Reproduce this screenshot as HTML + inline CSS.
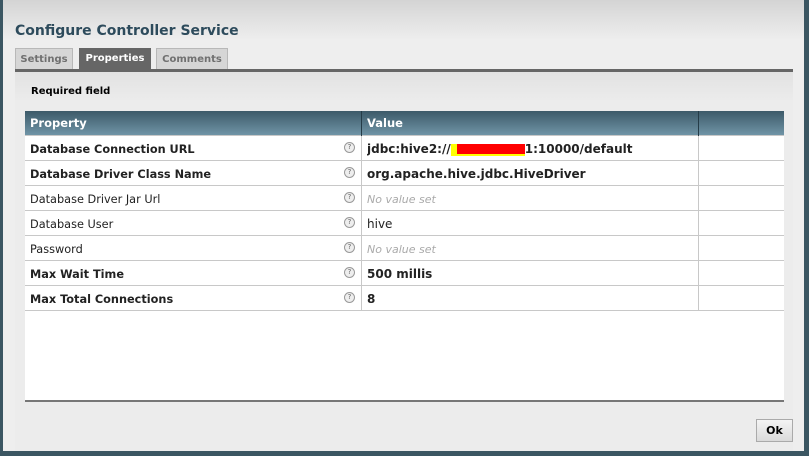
<!DOCTYPE html>
<html><head><style>
body{margin:0;width:809px;height:456px;background:#3b5662;position:relative;overflow:hidden;font-family:"DejaVu Sans","Liberation Sans",sans-serif;}
.dlg{position:absolute;left:3px;top:0;width:801px;height:451px;background:linear-gradient(#d4d4d4 0,#eeeeee 40px,#eeeeee);}
.title{position:absolute;left:12px;top:23px;font-size:14px;font-weight:bold;color:#2d4b5c;}
.tab{position:absolute;top:48px;height:21px;font-size:10px;font-weight:bold;line-height:22px;text-align:center;box-sizing:border-box;}
.off{background:#d6d6d6;border:1px solid #b8b8b8;border-bottom:none;color:#707070;}
.on{background:#666;color:#fff;}
.line{position:absolute;left:12px;top:69px;width:778px;height:3px;background:#666;}
.panel{position:absolute;left:12px;top:72px;width:778px;height:379px;background:linear-gradient(#e2e2e2,#ececec 30px);}
.req{position:absolute;left:28px;top:86px;font-size:10px;font-weight:bold;color:#000;}
table{position:absolute;left:22px;top:111px;width:759px;border-collapse:collapse;font-size:11.3px;}
th{height:24px;background:linear-gradient(#3d5a69,#6f94a6);color:#fff;text-align:left;padding:0 5px;border-right:1px solid #253c48;font-size:11.5px;}
td{height:24px;border:1px solid #c8c8c8;border-left:none;padding:0 5px;color:#222;background:#fff;white-space:nowrap;}
td>div{height:24px;line-height:27px;overflow:hidden;position:relative;}
td.v{font-size:12px;}
td.v.nv{font-size:11px;}
.q{position:absolute;right:1px;top:6px;width:9px;height:9px;border:1px solid #999;border-radius:50%;font-size:7px;line-height:9px;text-align:center;color:#666;background:#eee;font-style:normal;}
.nv{color:#aaa;font-style:italic;}
.body{position:absolute;left:22px;top:310px;width:759px;height:90px;background:#fff;border-bottom:2px solid #777;}
.ok{position:absolute;left:753px;top:419px;width:37px;height:23px;box-sizing:border-box;border:1px solid #aaa;background:linear-gradient(#f4f4f4,#dadada);font-size:11px;font-weight:bold;text-align:center;line-height:22px;}
</style></head><body>
<div class="dlg">
<div class="title">Configure Controller Service</div>
<div class="tab off" style="left:12px;width:58px">Settings</div>
<div class="tab on" style="left:76px;width:72px">Properties</div>
<div class="tab off" style="left:153px;width:72px">Comments</div>
<div class="line"></div>
<div class="panel"></div>
<div class="req">Required field</div>
<div class="body"></div>
<table>
<tr><th style="width:326px">Property</th><th style="width:326px">Value</th><th style="border-right:none"></th></tr>
<tr><td><div><b>Database Connection URL</b><span class="q">?</span></div></td><td class="v"><div><b>jdbc:hive2://<span style="background:#ff0;display:inline-block;height:12px;line-height:12px;vertical-align:-1px"><span style="background:#f00;display:inline-block;width:68px;height:10px;margin-left:6px"></span></span>1:10000/default</b></div></td><td style="border-right:none"></td></tr>
<tr><td><div><b>Database Driver Class Name</b><span class="q">?</span></div></td><td class="v"><div><b>org.apache.hive.jdbc.HiveDriver</b></div></td><td style="border-right:none"></td></tr>
<tr><td><div>Database Driver Jar Url<span class="q">?</span></div></td><td class="v nv"><div>No value set</div></td><td style="border-right:none"></td></tr>
<tr><td><div>Database User<span class="q">?</span></div></td><td class="v"><div>hive</div></td><td style="border-right:none"></td></tr>
<tr><td><div>Password<span class="q">?</span></div></td><td class="v nv"><div>No value set</div></td><td style="border-right:none"></td></tr>
<tr><td><div><b>Max Wait Time</b><span class="q">?</span></div></td><td class="v"><div><b>500 millis</b></div></td><td style="border-right:none"></td></tr>
<tr><td><div><b>Max Total Connections</b><span class="q">?</span></div></td><td class="v"><div><b>8</b></div></td><td style="border-right:none"></td></tr>
</table>
<div class="ok">Ok</div>
</div>
</body></html>
